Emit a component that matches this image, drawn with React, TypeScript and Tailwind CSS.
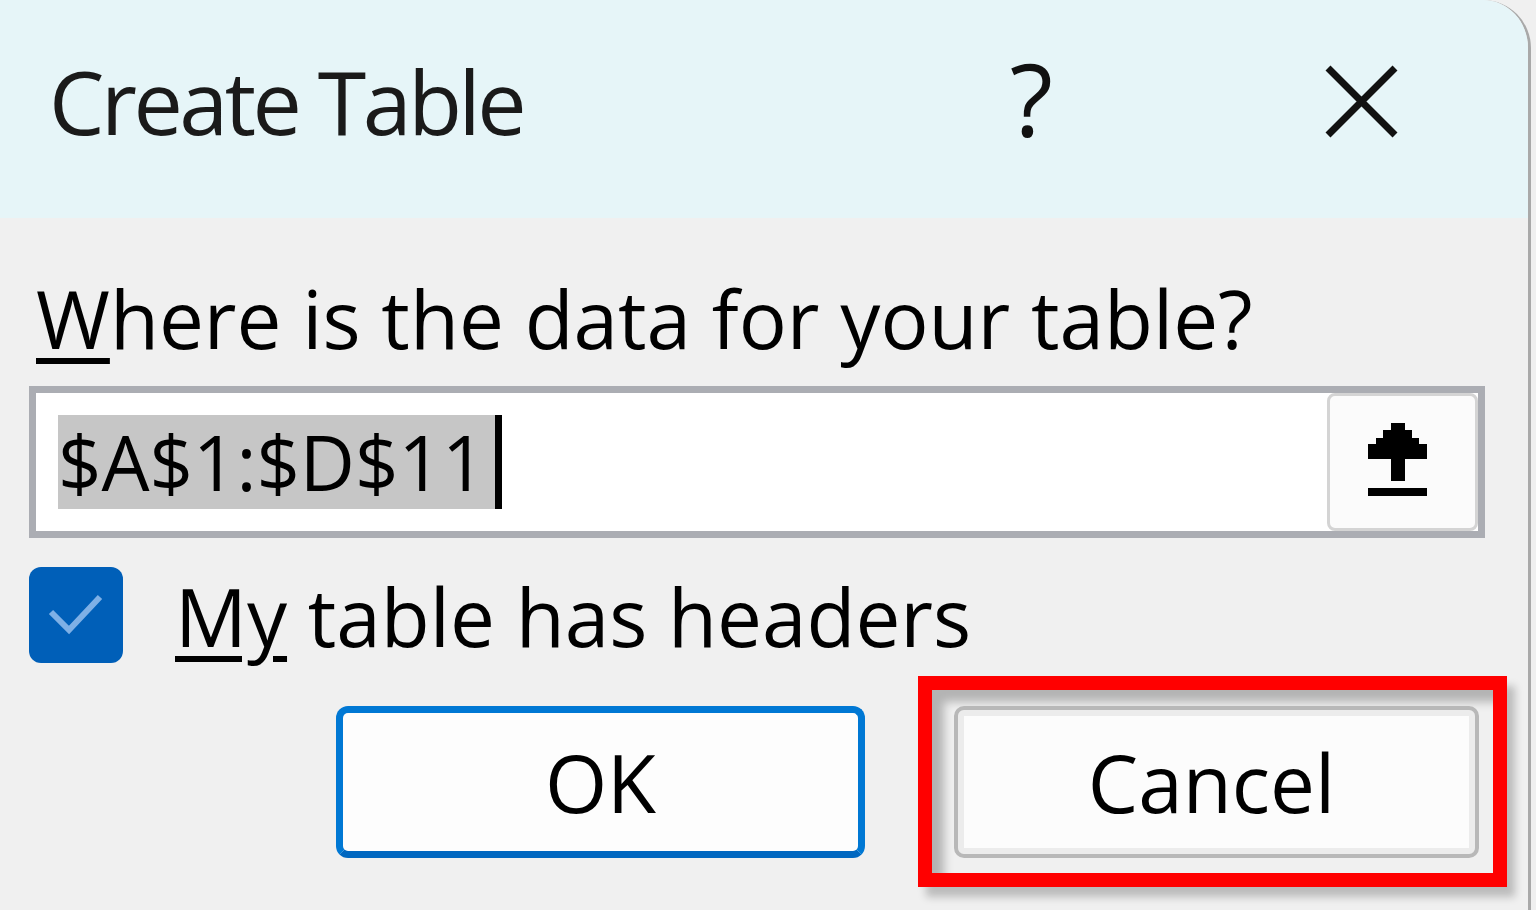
import { useState } from 'react';

export default function App() {
  const [hasHeaders, setHasHeaders] = useState(true);
  const [range] = useState('$A$1:$D$11');

  return (
    <div className="w-[1536px] h-[910px] overflow-hidden bg-[#f0f0f0] text-black font-['Open_Sans',sans-serif]">
      <div className="w-[1531px] h-full rounded-tr-[48px] border-r-[3px] border-[#a9a9a9] bg-[#f0f0f0] overflow-hidden">
        {/* title bar */}
        <div className="h-[218px] bg-[#e6f5f8] flex items-start pt-[57px] pl-[49px] pr-[130px]">
          <span className="flex-1 text-[88px] leading-none tracking-[-3.5px] text-[#1a1a1a]">Create Table</span>
          <span className="-mt-[9px] mr-[272px] text-[100px] leading-none text-[#111]">?</span>
          <svg className="mt-[8px] w-[73px] h-[73px]" viewBox="0 0 73 73">
            <path d="M3 3 L70 70 M70 3 L3 70" stroke="#111" strokeWidth="7" />
          </svg>
        </div>

        {/* body */}
        <div className="px-[29px]">
          <div className="mt-[60px] pl-[7px] text-[80px] leading-none">
            <span className="underline decoration-[6px] underline-offset-[9px]">W</span>here is the data for your table?
          </div>

          <div className="mt-[28px] w-[1456px] h-[152px] border-[7px] border-[#abadb3] bg-white flex items-center">
            <div className="ml-[22px] flex items-center">
              <span className="w-[437px] h-[94px] bg-[#c6c6c6] flex items-center text-[76px] leading-none">{range}</span>
              <span className="w-[7px] h-[94px] bg-black" />
            </div>
            <button className="ml-auto w-[151px] h-full border-[3px] border-[#d4d4d4] rounded-[8px] bg-[#fbfbfb] flex items-center justify-center">
              <svg className="w-[59px] h-[73px] -ml-[10px] -mt-[6px]" viewBox="0 0 59 73">
                <path d="M23 0 H37 V7 H44 V15 H51 V21 H59 V36 H37 V58 H23 V36 H0 V21 H8 V15 H15 V7 H23 Z" fill="#000" />
                <rect x="0" y="65" width="59" height="8" fill="#000" />
              </svg>
            </button>
          </div>

          <label className="mt-[29px] flex items-start cursor-default">
            <button
              onClick={() => setHasHeaders(!hasHeaders)}
              className={`w-[94px] h-[96px] rounded-[12px] flex items-center justify-center ${hasHeaders ? 'bg-[#005fb8]' : 'bg-white border-[3px] border-[#555]'}`}
            >
              {hasHeaders && (
                <svg className="w-[94px] h-[96px]" viewBox="0 0 94 96">
                  <path d="M22 45 L40 63 L71 30" stroke="#7eb0e6" strokeWidth="6" fill="none" />
                </svg>
              )}
            </button>
            <span className="ml-[52px] mt-[9px] text-[80px] leading-none">
              <span className="underline decoration-[6px] underline-offset-[9px]">My</span> table has headers
            </span>
          </label>

          <div className="mt-[43px] flex">
            <button className="ml-[307px] w-[529px] h-[152px] border-[7px] border-[#0078d4] border-b-[#0067c0] rounded-[12px] bg-[#fdfdfd] flex items-center justify-center text-[80px] leading-none">
              OK
            </button>
            <div className="relative ml-[89px]">
              <div className="absolute -left-[36px] -top-[30px] w-[589px] h-[211px] border-[14px] border-[#ff0000] shadow-[inset_12px_12px_10px_rgba(0,0,0,0.25),8px_10px_8px_rgba(0,0,0,0.22)]" />
              <button className="relative w-[525px] h-[152px] border-[4px] border-[#b8b8b8] rounded-[10px] bg-[#fcfcfc] shadow-[inset_0_0_0_6px_#ececec] flex items-center justify-center pr-[10px] text-[80px] leading-none">
                Cancel
              </button>
            </div>
          </div>
        </div>
      </div>
    </div>
  );
}
